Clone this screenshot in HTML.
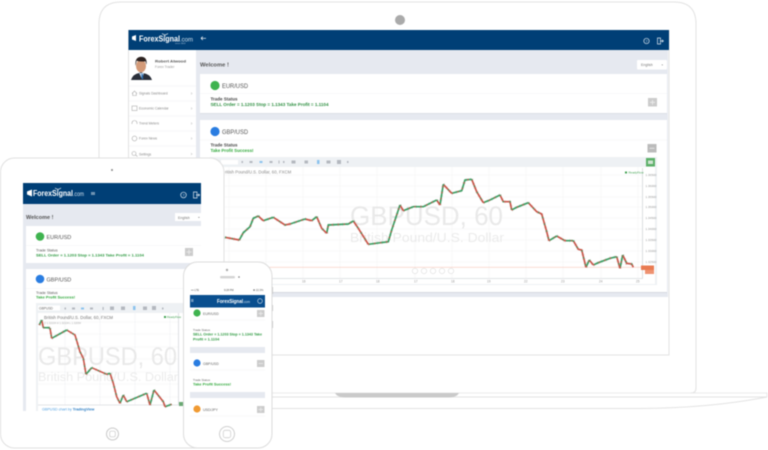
<!DOCTYPE html>
<html><head><meta charset="utf-8"><style>
html,body{margin:0;padding:0;background:#fff;width:768px;height:450px;overflow:hidden}
svg{display:block;filter:blur(.42px)}
text{font-family:"Liberation Sans",sans-serif}
</style></head><body>
<svg width="768" height="450" viewBox="0 0 768 450" xmlns="http://www.w3.org/2000/svg">
<defs>
<path id="g1" d="M239.300 240L243.300 232.700 250 226.700 253.300 218.300 258.300 216M263.300 220.700L273.300 217.300M290 224L305 219M311.700 220.700L316.700 216.700M326.700 233.300L328.300 225 348.300 224 353.300 221M368.300 244.300L388.300 241.700 391.700 230 400 205M403.300 210.700L413.300 206.700 423.300 206.700 436.700 200M440 205L443.300 184.300M451.700 193.300L461.700 190.700 465 180 471.700 179.300M483.300 202.700L490 200 500 195M511.700 210L516.700 207.300 528.300 202.700M549 240.700L556.700 236M565 240.700H573.300M586 267.300L589.300 260M593.300 265L598.300 262.700 610 258.300 616.700 256.700M620 268.300L622.700 255"/>
<path id="r1" d="M225 237.300L239.300 240M258.300 216L263.300 220.700M273.300 217.300L285 225 290 224M305 219L311.700 220.700M316.700 216.700L321.700 228.300 326.700 233.300M353.300 221L358.300 228.300 368.300 244.300M400 205L403.300 210.700M436.700 200L440 205M443.300 184.300L451.700 193.300M471.700 179.300L476.700 191.700 483.300 202.700M500 195L503.300 201.700 510 201.700 511.700 210M528.300 202.700L536.700 211.700 541.700 214 546.700 231.700 549 240.700M556.700 236L565 240.700M573.300 240.700L578.300 249.300 581.700 250 586 267.300M589.300 260L593.300 265M616.700 256.700L620 268.300M622.700 255L626.700 263.300 631.700 264 633.300 267.300"/>
<path id="g2" d="M39.300 325L41.700 320M43.300 327.700H50M51.700 338.300L66.700 330M86 374.300L91.700 367.700M106.700 374.300L110 373.300M120 403.300L123.300 395M126.700 401.700L146.700 393.300M150 405L154 390M165 406.700L171.700 404.300"/>
<path id="r2" d="M41.700 320L43.300 327.700M50 328.300L51.700 338.300M66.700 330L75 335 80 351.700 83.300 358.300 86 374.300M91.700 367.700L106.700 374.300M110 373.300L113.300 383.300 116.700 396.700 120 403.300M123.300 395L126.700 401.700M146.700 393.300L150 405M154 390L163.300 401.700 165 406.700"/>
</defs>
<!-- LAPTOP -->
<path d="M99 393V24Q99 2 121 2H674Q696 2 696 24V388Q696 393 691 393" fill="#fff" stroke="#e2e2e2" stroke-width="1"/>
<path d="M30 393H767V397H30Z" fill="#fff" stroke="#e4e4e4" stroke-width=".8"/>
<path d="M30 397H767Q710 408 640 408.500H120Q70 408 30 397Z" fill="#fff" stroke="#e2e2e2" stroke-width="1"/>
<path d="M335 393H459Q457 397 450 397.500H344Q337 397 335 393Z" fill="#cacaca"/>
<circle cx="400" cy="20" r="5" fill="#aaa"/>
<rect x="128.500" y="30.500" width="540.500" height="324.500" fill="#fff" stroke="#e2e2e2"/>
<rect x="129" y="50" width="539" height="247" fill="#e6e9f0"/>
<rect x="128.500" y="30" width="540.500" height="20" fill="#003f76"/>
<path d="M132 36.500l4-1.500v6l-4-1.500z" fill="#fff"/>
<text x="139" y="41.500" font-size="7.800" font-weight="700" fill="#fff" textLength="41" lengthAdjust="spacingAndGlyphs">ForexSignal</text>
<text x="180" y="41.500" font-size="6.500" fill="#cfe0ee" textLength="13" lengthAdjust="spacingAndGlyphs">.com</text>
<path d="M162 33.500q3 2.500 6 0M165 35v2" stroke="#fff" stroke-width=".6" fill="none"/>
<text x="175" y="44" font-size="2.200" fill="#b9cfe2">since 2002</text>
<path d="M201 38.300h5M201 38.300l1.800-1.700M201 38.300l1.800 1.700" stroke="#fff" stroke-width=".7" fill="none"/>
<circle cx="646.500" cy="41" r="2.700" fill="none" stroke="#dde7f0" stroke-width=".7"/>
<text x="645.500" y="42.500" font-size="3.600" fill="#dde7f0">?</text>
<path d="M657.500 38h3v6h-3zM660 41h3M662 39.700l1.400 1.300-1.400 1.300" fill="none" stroke="#dde7f0" stroke-width=".7"/>
<!-- sidebar -->
<rect x="129" y="50" width="67" height="250" fill="#fff"/>
<path d="M131 80q2-6 8-7l2-1 2 1q7 1 9 7z" fill="#2a2f3a"/>
<path d="M139 73l3 6 2-6z" fill="#b9d3ee"/><path d="M141.500 74h1.200l.6 5h-1.800z" fill="#2f6fb0"/>
<ellipse cx="141" cy="66" rx="5" ry="6.300" fill="#d39a78"/>
<path d="M135.500 66q-1-9 5.500-9.300 6.500 0 5.500 8l-1-3.500q-4 .8-9-.5z" fill="#2c2220"/>
<text x="155" y="62.700" font-size="4" font-weight="700" fill="#555" textLength="31" lengthAdjust="spacingAndGlyphs">Robert Atwood</text>
<text x="155" y="67.800" font-size="3.400" fill="#999">Forex Trader</text>
<g stroke="#eff0f3" stroke-width=".6"><path d="M129 86h67M129 101h67M129 116h67M129 131h67M129 146h67"/></g>
<g font-size="3.400" fill="#8a8a8a">
<text x="139" y="94.500">Signals Dashboard</text><text x="139" y="109.500">Economic Calendar</text><text x="139" y="124.500">Trend Meters</text><text x="139" y="139.500">Forex News</text><text x="139" y="155.500">Settings</text>
</g>
<g fill="none" stroke="#aaa" stroke-width=".6">
<path d="M132 93.500l2.500-2.500 2.500 2.500M132.700 93v2.500h3.600V93"/><rect x="132" y="106" width="5" height="4.500"/><path d="M132 124v-1a2.500 2.500 0 0 1 5 0v1"/><circle cx="134.500" cy="138.500" r="2.400"/><circle cx="134" cy="153.500" r="2"/><path d="M135.500 155l2 1.500"/>
<path d="M191 92.500l1 1-1 1M191 107.500l1 1-1 1M191 122.500l1 1-1 1M191 137.500l1 1-1 1M191 153l1 1-1 1" stroke="#ccc"/>
</g>
<text x="200" y="66.500" font-size="5.800" font-weight="700" fill="#555">Welcome !</text>
<rect x="637" y="60" width="30" height="9.500" rx="1" fill="#fff"/>
<text x="641" y="66" font-size="3.600" fill="#777">English</text><path d="M661.500 64.500h1.600l-.8 1z" fill="#777"/>
<!-- card 1 -->
<rect x="200" y="74" width="467" height="39" fill="#fff"/>
<path d="M200 113.500h467" stroke="#dcdfe6"/>
<path d="M200 93.500h467" stroke="#f2f3f5" stroke-width=".6"/>
<circle cx="215" cy="85.500" r="4.600" fill="#3fb34f"/>
<text x="222" y="88" font-size="6.200" fill="#555" textLength="26" lengthAdjust="spacingAndGlyphs">EUR/USD</text>
<text x="210.500" y="100.700" font-size="4.300" font-weight="700" fill="#444" textLength="27" lengthAdjust="spacingAndGlyphs">Trade Status</text>
<text x="210.500" y="105.800" font-size="4.200" font-weight="700" fill="#2e8f41" textLength="118" lengthAdjust="spacingAndGlyphs">SELL Order = 1.1203 Stop = 1.1343 Take Profit = 1.1104</text>
<rect x="648" y="98" width="9" height="8.500" fill="#ccc"/><path d="M650 102.300h5M652.500 100v4.600" stroke="#eee" stroke-width=".8"/>
<!-- card 2 -->
<rect x="200" y="120" width="467" height="172" fill="#fff"/>
<path d="M200 292.500h467" stroke="#d6d9e0"/>
<path d="M200 140h467" stroke="#f2f3f5" stroke-width=".6"/>
<circle cx="215" cy="131.500" r="4.600" fill="#2a7de1"/>
<text x="222" y="134" font-size="6.200" fill="#555" textLength="26" lengthAdjust="spacingAndGlyphs">GBP/USD</text>
<text x="210.500" y="146.500" font-size="4.300" font-weight="700" fill="#444" textLength="27" lengthAdjust="spacingAndGlyphs">Trade Status</text>
<text x="210.500" y="151.800" font-size="4.300" font-weight="700" fill="#2fa83a" textLength="43" lengthAdjust="spacingAndGlyphs">Take Profit Success!</text>
<rect x="647.500" y="144" width="9" height="8.500" fill="#bbb"/><path d="M649.500 148.300h5" stroke="#eee" stroke-width=".8"/>
<!-- laptop chart -->
<rect x="210" y="157" width="447" height="128" fill="#eef1f4"/>
<rect x="214" y="167" width="441" height="117" fill="#fff"/>
<rect x="646" y="158" width="9" height="8.500" fill="#5cb068"/><rect x="648" y="160.500" width="5" height="3.500" fill="#cfe3d2"/>
<g fill="#b4b8bf"><rect x="221" y="160" width="17" height="4.500" fill="#fff"/><rect x="241.500" y="161" width="1.500" height="2"/><rect x="249.500" y="161" width="3" height="2"/><rect x="259.500" y="161" width="3" height="2" fill="#8cc3ee"/><rect x="269.500" y="161" width="3" height="2"/><rect x="278.500" y="160.500" width="1" height="3"/><rect x="283" y="161" width="1.500" height="2"/><rect x="291.500" y="160.500" width="4" height="3"/><rect x="304.500" y="160.500" width="3.500" height="3"/><rect x="317" y="160" width="2.500" height="4" fill="#8cc3ee"/><rect x="326.500" y="160.500" width="4" height="3"/><rect x="337" y="160" width="4" height="4"/><rect x="347" y="161" width="1.500" height="2"/></g>
<g stroke="#f3f4f6" stroke-width=".6">
<path d="M229 167v111M266 167v111M303 167v111M340 167v111M377 167v111M415 167v111M452 167v111M489 167v111M526 167v111M563 167v111M601 167v111M638 167v111"/>
<path d="M214 175h428M214 186h428M214 197h428M214 207h428M214 218h428M214 229h428M214 240h428M214 251h428M214 262h428"/>
</g>
<path d="M642.500 168v110.500H214" fill="none" stroke="#c4c8ce" stroke-width=".6"/>
<text x="350" y="225" font-size="27" fill="#e9e9e9" textLength="153" lengthAdjust="spacingAndGlyphs">GBPUSD, 60</text>
<text x="350" y="242" font-size="12.500" fill="#ebebeb" textLength="154" lengthAdjust="spacingAndGlyphs">British Pound/U.S. Dollar</text>
<text x="225" y="173.500" font-size="4.300" fill="#888">ritish Pound/U.S. Dollar, 60, FXCM</text>
<path d="M225 267.300H641" stroke="#f9d7cd" stroke-width=".8"/>
<g fill="#fff" stroke="#ddd" stroke-width=".6"><circle cx="415" cy="271" r="2.700"/><circle cx="424" cy="271" r="2.700"/><circle cx="433" cy="271" r="2.700"/><circle cx="442" cy="271" r="2.700"/><circle cx="451" cy="271" r="2.700"/></g>
<g font-size="3.200" fill="#999"><text x="302" y="282.500">16</text><text x="339" y="282.500">17</text><text x="376" y="282.500">18</text><text x="414" y="282.500">17</text><text x="451" y="282.500">18</text><text x="487" y="282.500">19</text><text x="524" y="282.500">22</text><text x="561" y="282.500">23</text><text x="599" y="282.500">24</text><text x="636" y="282.500">25</text></g>
<g font-size="3" fill="#999"><text x="645.500" y="176">1.36500</text><text x="645.500" y="187">1.36000</text><text x="645.500" y="198">1.35500</text><text x="645.500" y="208">1.35000</text><text x="645.500" y="219">1.34500</text><text x="645.500" y="230">1.34000</text><text x="645.500" y="241">1.33500</text><text x="645.500" y="252">1.33000</text><text x="645.500" y="263">1.32500</text></g>
<rect x="641" y="265.500" width="13" height="4.500" fill="#e97b52"/><rect x="645" y="270" width="9" height="4" fill="#ee9271"/>
<rect x="625" y="171.500" width="2" height="2" fill="#3fa04f"/><text x="628.500" y="173.500" font-size="3" fill="#3fa04f">ReadyFlow</text>
<g fill="none" stroke-linecap="butt">
<g stroke="#999" opacity=".45" stroke-width="3.400" stroke-dasharray=".5 4"><use href="#g1"/><use href="#r1"/></g>
<use href="#g1" stroke="#3e9e63" stroke-width="1.700"/>
<use href="#r1" stroke="#c9574a" stroke-width="1.700"/>
<use href="#g1" stroke="#c9574a" stroke-width="1.700" stroke-dasharray="1 5"/>
<use href="#r1" stroke="#3e9e63" stroke-width="1.700" stroke-dasharray="1 6"/>
</g>

<!-- TABLET -->
<rect x=".5" y="158" width="223.500" height="290" rx="14" fill="#fff" stroke="#e0e0e0"/>
<circle cx="112" cy="170" r="1" fill="#888"/>
<rect x="23" y="183" width="178" height="228" fill="#e6e9f0"/>
<rect x="23" y="183" width="178" height="21" fill="#003f76"/>
<path d="M27 191.500l5-2v7l-5-2z" fill="#fff"/>
<text x="33" y="196" font-size="7.800" font-weight="700" fill="#fff" textLength="40" lengthAdjust="spacingAndGlyphs">ForexSignal</text>
<text x="73" y="196" font-size="6.500" fill="#cfe0ee" textLength="11" lengthAdjust="spacingAndGlyphs">.com</text>
<path d="M55 188q3 2.500 6 0M58 189.500v2" stroke="#fff" stroke-width=".6" fill="none"/>
<path d="M91 192.500h4M91 193.500h4M91 194.500h4" stroke="#dde7f0" stroke-width=".6"/>
<circle cx="183.500" cy="195" r="2.800" fill="none" stroke="#dde7f0" stroke-width=".7"/><text x="182.500" y="196.500" font-size="3.800" fill="#dde7f0">?</text>
<path d="M193.500 192h3.500v6h-3.500zM196 195h3.500M198.300 193.700l1.300 1.300-1.300 1.300" fill="none" stroke="#dde7f0" stroke-width=".7"/>
<text x="26" y="219" font-size="5.500" font-weight="700" fill="#555">Welcome !</text>
<rect x="175" y="213" width="26" height="8" fill="#fff"/><text x="178" y="219" font-size="3.600" fill="#777">English</text><path d="M198 217h1.800l-.9 1z" fill="#777"/>
<rect x="26" y="226" width="175" height="37" fill="#fff"/>
<path d="M26 245.500h175" stroke="#f2f3f5" stroke-width=".6"/>
<circle cx="40" cy="236.500" r="4.300" fill="#3fb34f"/>
<text x="46.500" y="239" font-size="5.500" fill="#555">EUR/USD</text>
<text x="36" y="251.500" font-size="3.800" fill="#555">Trade Status</text>
<text x="36" y="256.300" font-size="4" font-weight="700" fill="#2e9a41" textLength="108" lengthAdjust="spacingAndGlyphs">SELL Order = 1.1203 Stop = 1.1343 Take Profit = 1.1104</text>
<rect x="185" y="248" width="8" height="8" fill="#ccc"/><path d="M186.500 252h5M189 249.500v5" stroke="#eee" stroke-width=".8"/>
<rect x="26" y="269" width="175" height="142" fill="#fff"/>
<path d="M26 288.500h175" stroke="#f2f3f5" stroke-width=".6"/>
<circle cx="40" cy="279" r="4.300" fill="#2a7de1"/>
<text x="46.500" y="281.500" font-size="5.500" fill="#555">GBP/USD</text>
<text x="36" y="294" font-size="3.800" fill="#555">Trade Status</text>
<text x="36" y="298.500" font-size="4" font-weight="700" fill="#2fa83a">Take Profit Success!</text>
<rect x="36" y="303" width="148" height="108" fill="#eef1f4"/>
<rect x="38" y="313" width="146" height="98" fill="#fff"/>
<rect x="38" y="305.500" width="22" height="5" fill="#fff"/><text x="39" y="309.500" font-size="3.300" fill="#666">GBPUSD</text>
<g fill="#b4b8bf"><rect x="64.500" y="307.500" width="1.500" height="2"/><rect x="72" y="307.500" width="3" height="2"/><rect x="81" y="307.500" width="3" height="2" fill="#8cc3ee"/><rect x="90" y="307.500" width="3" height="2"/><rect x="102.500" y="307" width="1.200" height="3"/><rect x="110" y="306.500" width="4" height="3.500"/><rect x="121" y="306.500" width="4" height="3.500"/><rect x="133" y="306" width="2.500" height="4" fill="#8cc3ee"/><rect x="143" y="306.500" width="4" height="3.500"/><rect x="152" y="306" width="4" height="4"/><rect x="162" y="307.500" width="1.500" height="2"/></g>
<g stroke="#f1f2f4" stroke-width=".6"><path d="M65 313v92M100 313v92M135 313v92M170 313v92M38 322h140M38 334h140M38 347h140M38 359h140M38 372h140M38 384h140M38 397h140"/></g>
<path d="M178.500 313v92H38" fill="none" stroke="#c9ccd2" stroke-width=".6"/>
<text x="38" y="365" font-size="25" fill="#e9e9e9" textLength="139" lengthAdjust="spacingAndGlyphs">GBPUSD, 60</text>
<text x="38" y="381" font-size="11.500" fill="#ebebeb" textLength="140" lengthAdjust="spacingAndGlyphs">British Pound/U.S. Dollar</text>
<text x="44" y="319" font-size="4.300" fill="#777">British Pound/U.S. Dollar, 60, FXCM</text>
<text x="44" y="324" font-size="2.600" fill="#aaa">O 1.32104 H 1.32104 L 1.32054</text>
<rect x="164" y="316" width="2" height="2" fill="#3fa04f"/><text x="167" y="318" font-size="2.800" fill="#3fa04f">ReadyFlow</text>
<rect x="179" y="402" width="4" height="4" fill="#6aa873"/>
<text x="42" y="410.500" font-size="3.700" fill="#4f9fe0">GBPUSD chart by <tspan font-weight="700" fill="#2f7fc4">TradingView</tspan></text>
<g fill="none" stroke-linecap="butt">
<g stroke="#999" opacity=".45" stroke-width="3.400" stroke-dasharray=".5 4"><use href="#g2"/><use href="#r2"/></g>
<use href="#g2" stroke="#3e9e63" stroke-width="1.600"/>
<use href="#r2" stroke="#c9574a" stroke-width="1.600"/>
<use href="#g2" stroke="#c9574a" stroke-width="1.600" stroke-dasharray="1 5"/>
<use href="#r2" stroke="#3e9e63" stroke-width="1.600" stroke-dasharray="1 6"/>
</g>
<circle cx="112.500" cy="434" r="6" fill="#fff" stroke="#c9c9c9" stroke-width="1"/>
<rect x="109.700" y="431.200" width="5.600" height="5.600" rx="1.500" fill="none" stroke="#c9c9c9" stroke-width=".7"/>

<!-- PHONE -->
<g stroke="#bfbfbf" stroke-width="1"><path d="M272.500 287v7M272.500 305v6M272.500 321v7"/></g>
<rect x="183.500" y="262" width="88.500" height="186" rx="14" fill="#fff" stroke="#dcdcdc"/>
<circle cx="227" cy="270" r="1.200" fill="#aaa"/>
<rect x="220" y="276" width="15" height="2.400" rx="1.200" fill="#d4d4d4"/>
<circle cx="239" cy="277" r=".8" fill="#777"/>
<g font-size="2.600" fill="#555"><text x="191" y="291">••• LTE</text><text x="224" y="291">9:28 PM</text><text x="253" y="291">✱ 22.3%</text></g>
<rect x="190" y="295" width="75" height="12.500" fill="#0a4f8f"/>
<path d="M191 299.500h2.500M191 300.500h2.500M191 301.500h2.500" stroke="#cfe0ee" stroke-width=".5"/>
<text x="217" y="303" font-size="5" font-weight="700" fill="#fff" textLength="26" lengthAdjust="spacingAndGlyphs">ForexSignal</text>
<text x="243" y="303" font-size="4" fill="#cfe0ee" textLength="7" lengthAdjust="spacingAndGlyphs">.com</text>
<circle cx="260" cy="301" r="2.300" fill="none" stroke="#dde7f0" stroke-width=".6"/>
<circle cx="197" cy="313" r="3.600" fill="#3fb34f"/>
<text x="203" y="314.800" font-size="3.500" fill="#666">EUR/USD</text>
<rect x="257" y="310" width="7.500" height="7" fill="#ccc"/><path d="M258.500 313.500h4.500M260.700 311.300v4.400" stroke="#eee" stroke-width=".7"/>
<path d="M190 320h75" stroke="#f2f3f5" stroke-width=".6"/>
<text x="193" y="331" font-size="3" fill="#666">Trade Status</text>
<text x="193" y="335.500" font-size="3.900" font-weight="700" fill="#2e9a41" textLength="69" lengthAdjust="spacingAndGlyphs">SELL Order = 1.1203 Stop = 1.1343 Take</text>
<text x="193" y="340.500" font-size="3.900" font-weight="700" fill="#2e9a41">Profit = 1.1104</text>
<rect x="190" y="347" width="75" height="6" fill="#e6e9f0"/>
<circle cx="197" cy="363" r="3.600" fill="#2a7de1"/>
<text x="203" y="364.800" font-size="3.500" fill="#666">GBP/USD</text>
<rect x="257" y="360" width="7.500" height="7" fill="#ccc"/><path d="M258.500 363.500h4.500" stroke="#eee" stroke-width=".7"/>
<path d="M190 370h75" stroke="#f2f3f5" stroke-width=".6"/>
<text x="193" y="381" font-size="3" fill="#666">Trade Status</text>
<text x="193" y="385.500" font-size="3.900" font-weight="700" fill="#2fa83a">Take Profit Success!</text>
<rect x="190" y="392" width="75" height="6" fill="#e6e9f0"/>
<circle cx="197" cy="409" r="3.600" fill="#f09a32"/>
<text x="203" y="410.800" font-size="3.500" fill="#666">USD/JPY</text>
<rect x="257" y="406" width="7.500" height="7" fill="#ccc"/><path d="M258.500 409.500h4.500M260.700 407.300v4.400" stroke="#eee" stroke-width=".7"/>
<path d="M190 416h75" stroke="#f2f3f5" stroke-width=".6"/>
<circle cx="227" cy="434" r="7.500" fill="#fff" stroke="#cfcfcf" stroke-width="1"/>
<rect x="223.300" y="430.300" width="7.400" height="7.400" rx="2" fill="none" stroke="#cfcfcf" stroke-width=".8"/>
</svg>
</body></html>
